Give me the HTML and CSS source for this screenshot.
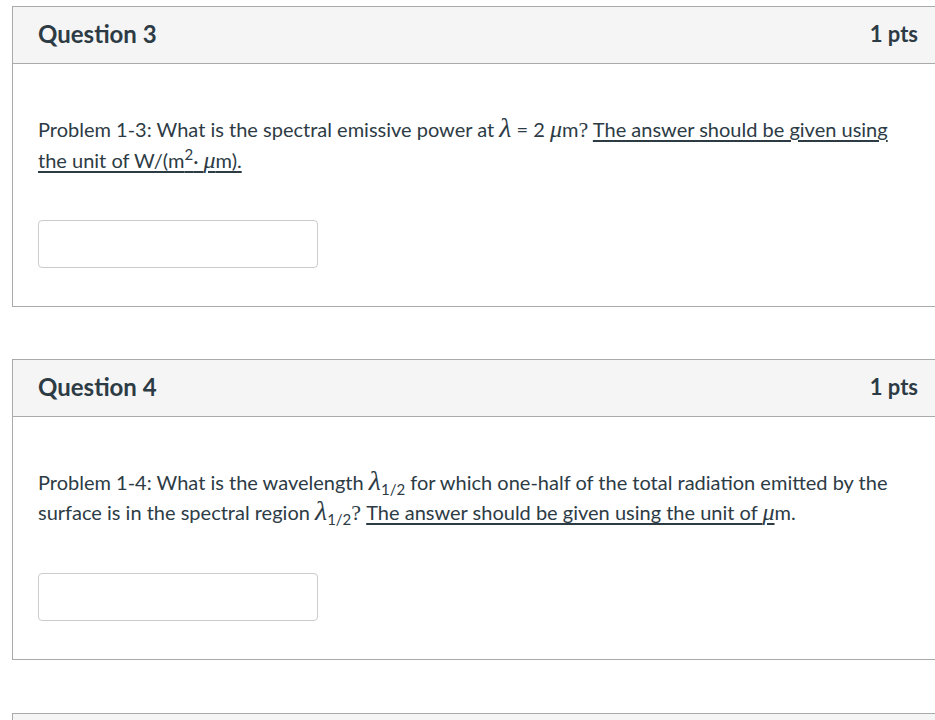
FILE: index.html
```html
<!DOCTYPE html>
<html>
<head>
<meta charset="utf-8">
<link rel="stylesheet" href="styles.css">
</head>
<body>
<div class="page">
  <div class="card">
    <div class="card-head">
      <h2 class="q-title">Question 3</h2>
      <span class="pts">1 pts</span>
    </div>
    <div class="card-body">
      <p class="q-text">Problem 1-3: What is the spectral emissive power at <span class="math">λ</span> = 2 <span class="mu">μ</span>m<span class="serif">?</span> <span class="ul">The answer should be given using the unit of W/(m<sup class="sup">2</sup>·&nbsp;<span class="mu">μ</span>m).</span></p>
      <div class="answer"></div>
    </div>
  </div>

  <div class="card">
    <div class="card-head">
      <h2 class="q-title">Question 4</h2>
      <span class="pts">1 pts</span>
    </div>
    <div class="card-body">
      <p class="q-text">Problem 1-4: What is the wavelength <span class="math">λ</span><sub class="sub">1/2</sub> for which one-half of the total radiation emitted by the surface is in the spectral region <span class="math">λ</span><sub class="sub">1/2</sub><span class="serif">?</span> <span class="ul">The answer should be given using the unit of <span class="mu">μ</span></span>m.</p>
      <div class="answer"></div>
    </div>
  </div>

  <div class="card">
    <div class="card-head"></div>
  </div>
</div>
</body>
</html>
```
FILE: styles.css
```css
html, body {
  margin: 0;
  padding: 0;
  background: #ffffff;
}
body {
  font-family: Lato, "Open Sans", "Liberation Sans", sans-serif;
  color: #2d3b45;
  overflow: hidden;
}
.page {
  padding: 6px 0 0 12px;
  display: flex;
  flex-direction: column;
  gap: 52.4px;
}
.card {
  border: 1px solid #aaaaaa;
  border-right: none;
  background: #ffffff;
}
.card-head {
  height: 57px;
  box-sizing: border-box;
  background: #f5f5f5;
  border-bottom: 1px solid #aaaaaa;
  display: flex;
  align-items: center;
  justify-content: space-between;
  padding: 0 17px 3px 25px;
}
.q-title {
  margin: 0;
  font-size: 24px;
  font-weight: 700;
}
.pts {
  font-size: 22px;
  font-weight: 700;
}
.card-body {
  padding: 50px 25px 38px 25px;
}
.q-text {
  margin: 0;
  font-size: 20px;
  line-height: 30px;
  height: 60px;
}
.math {
  font-family: "Liberation Serif", "DejaVu Serif", serif;
  font-style: italic;
  font-size: 28px;
  line-height: 0;
}
.mu {
  font-family: "Liberation Serif", "DejaVu Serif", serif;
  font-style: italic;
  font-size: 24px;
  line-height: 0;
}
.serif {
  font-family: "Liberation Serif", serif;
  font-size: 22px;
}
.sub {
  font-size: 15px;
  line-height: 0;
  vertical-align: -5px;
}
.sup {
  font-size: 15px;
  line-height: 0;
  vertical-align: 8px;
}
.ul {
  text-decoration: underline;
  text-decoration-thickness: 2px;
  text-underline-offset: 3px;
}
.answer {
  margin-top: 46px;
  width: 278px;
  height: 46px;
  border: 1px solid #cccccc;
  border-radius: 4px;
}
```
